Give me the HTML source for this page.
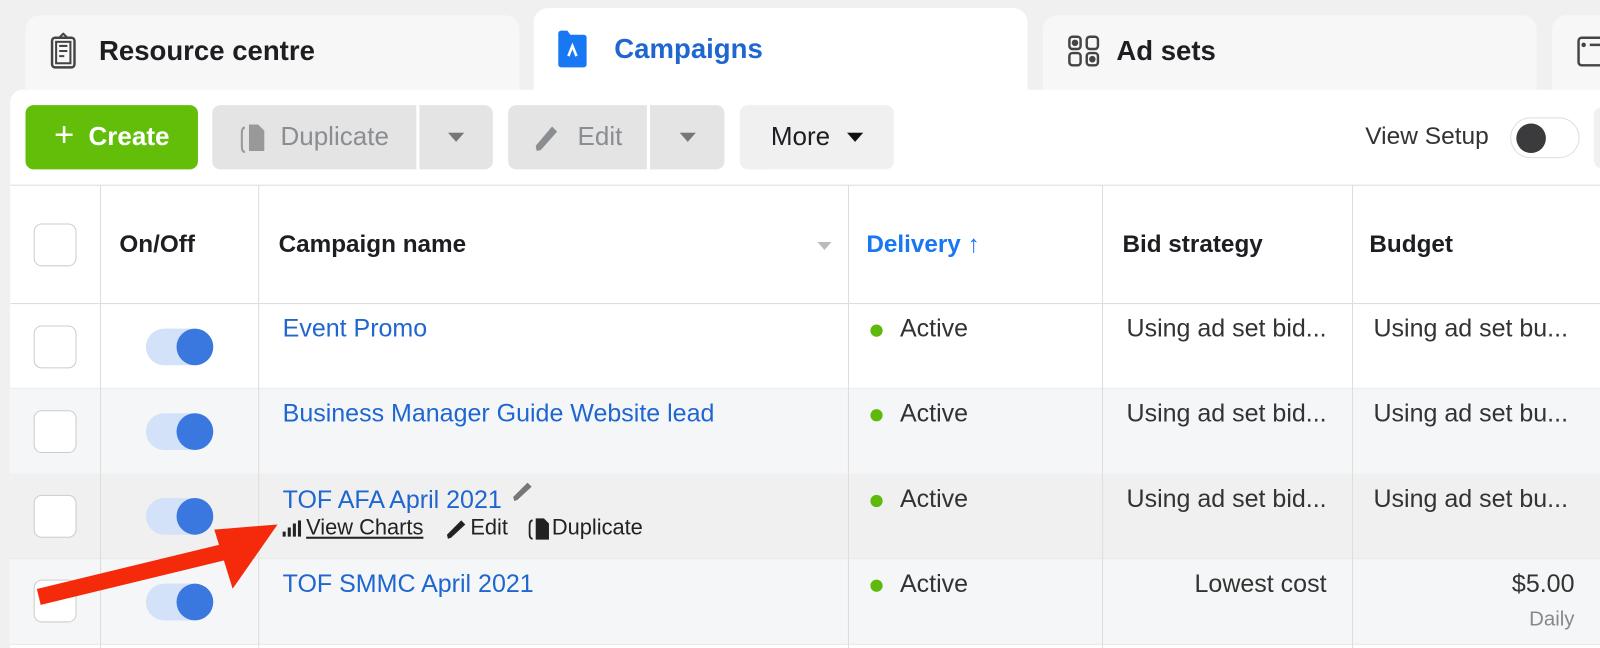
<!DOCTYPE html>
<html style="overflow:hidden;width:1600px;height:648px"><head><meta charset="utf-8"><style>
*{box-sizing:border-box;margin:0;padding:0}
body{width:1600px;height:648px;overflow:hidden;background:#f0f0f0;font-family:"Liberation Sans",Arial,sans-serif;color:#1c1e21;position:relative}
#w{position:absolute;left:0;top:0;width:1600px;height:635px;transform:scale(1.0204);transform-origin:0 0;overflow:hidden}
.abs{position:absolute}
.tab{position:absolute;top:15px;height:80px;background:#f7f7f7;border-radius:14px 14px 0 0;font-size:27px;font-weight:bold;display:flex;align-items:center;padding-left:24px;gap:16px;padding-bottom:10px}
.panel{position:absolute;left:10px;top:88px;width:1600px;height:580px;background:#fff;border-radius:12px 0 0 0}
.btn{position:absolute;top:103px;height:63px;border-radius:8px;display:flex;align-items:center;justify-content:center;font-size:25.5px}
.g{background:#e4e4e4;color:#8a8d91}
.vl{position:absolute;top:182px;height:466px;width:1px;background:#ddd}
.row{position:absolute;left:10px;width:1590px;height:84px;border-bottom:1px solid #e8e8e8}
.cb{position:absolute;left:33px;width:42px;height:42px;border:1px solid #ccc;border-radius:8px;background:#fff}
.tg{position:absolute;left:143px;width:66px;height:36px;border-radius:18px;background:#d3e2f8}
.tg:after{content:"";position:absolute;right:0;top:0;width:36px;height:36px;border-radius:50%;background:#3a78e0}
.t{position:absolute;font-size:24.5px;white-space:nowrap}
.lnk{color:#1f66d1}
.dot{position:absolute;width:12px;height:12px;border-radius:50%;background:#5fb90d}
.h{position:absolute;top:226px;font-size:23.8px;font-weight:bold}
</style></head><body><div id="w">
<div class="tab" style="left:25px;width:484px;color:#1c1e21;gap:22px">
<svg width="26" height="36" viewBox="0 0 26 36"><rect x="2" y="5" width="22" height="29" rx="3" fill="none" stroke="#444" stroke-width="2.4"/><rect x="6" y="9" width="14" height="21" fill="none" stroke="#444" stroke-width="2"/><path d="M9 13h8M9 18h8M9 23h5" stroke="#444" stroke-width="2"/><path d="M9 5l4-4 4 4" fill="none" stroke="#444" stroke-width="2"/></svg>Resource centre</div>
<div class="tab" style="left:523px;top:8px;height:90px;width:484px;background:#fff;color:#1f66d1;padding-bottom:10px;gap:27px">
<svg width="28" height="38" viewBox="0 0 28 38"><path d="M0 4a3 3 0 013-3h6l3 4h13a3 3 0 013 3v26a3 3 0 01-3 3H3a3 3 0 01-3-3z" fill="#1877f2"/><path d="M10 26l4-10 4 10" stroke="#fff" stroke-width="2.5" fill="none"/></svg>Campaigns</div>
<div class="tab" style="left:1022px;width:484px">
<svg width="32" height="32" viewBox="0 0 32 32" fill="none" stroke="#444" stroke-width="2.4"><rect x="2" y="2" width="11" height="12" rx="3"/><rect x="19" y="2" width="11" height="12" rx="3"/><rect x="2" y="18" width="11" height="12" rx="3"/><rect x="19" y="18" width="11" height="12" rx="3"/><circle cx="7.5" cy="8" r="2" fill="#444"/><circle cx="24.5" cy="24" r="2" fill="#444"/></svg>Ad sets</div>
<div class="tab" style="left:1521px;width:200px"><svg width="30" height="32" viewBox="0 0 30 32" fill="none" stroke="#444" stroke-width="2.4"><rect x="2" y="3" width="40" height="27" rx="3"/><path d="M13 10h30"/><circle cx="7" cy="10" r="1" fill="#444"/></svg></div>
<div class="panel"></div>
<div class="btn" style="left:25px;width:169px;background:#63be0a;color:#fff;font-weight:bold;gap:14px"><span style="font-size:34px;font-weight:normal;margin-top:-4px">+</span>Create</div>
<div class="btn g" style="left:208px;width:200px;border-radius:8px 0 0 8px;gap:10px"><svg width="30" height="30" viewBox="0 0 30 30"><path d="M5 5q-3 0-3 6v12q0 6 3 6" fill="none" stroke="#999" stroke-width="2"/><path d="M9 2h9l6 6v20H9z" fill="#999"/></svg>Duplicate</div>
<div class="btn g" style="left:411px;width:72px;border-radius:0 8px 8px 0"><svg width="16" height="10"><path d="M0 0h16L8 9z" fill="#777"/></svg></div>
<div class="btn g" style="left:498px;width:136px;border-radius:8px 0 0 8px;gap:16px"><svg width="28" height="28" viewBox="0 0 28 28"><path d="M4 27l-1-5L19 3l5 5L8 26z" fill="#8a8d91"/></svg>Edit</div>
<div class="btn g" style="left:637px;width:73px;border-radius:0 8px 8px 0"><svg width="16" height="10"><path d="M0 0h16L8 9z" fill="#777"/></svg></div>
<div class="btn" style="left:725px;width:151px;background:#f0f0f0;color:#1c1e21;gap:16px">More<svg width="16" height="10"><path d="M0 0h16L8 9z" fill="#111"/></svg></div>
<div class="t" style="left:1338px;top:120px;font-size:24px;color:#333">View Setup</div>
<div class="abs" style="left:1480px;top:115px;width:68px;height:40px;border:1px solid #ddd;border-radius:20px;background:#fff"><div class="abs" style="left:5px;top:5px;width:29px;height:29px;border-radius:50%;background:#3b3b3d"></div></div>
<div class="abs" style="left:1562px;top:105px;width:60px;height:60px;border-radius:8px;background:#f0f0f0"></div>
<div class="abs" style="left:10px;top:181px;width:1590px;height:1px;background:#ddd"></div>
<div class="row" style="top:297px;background:#fff;border-top:1px solid #ddd"></div>
<div class="row" style="top:381px;background:#f5f6f7"></div>
<div class="row" style="top:464px;background:#f0f0f0"></div>
<div class="row" style="top:548px;background:#f5f6f7"></div>
<div class="vl" style="left:98px"></div><div class="vl" style="left:253px"></div><div class="vl" style="left:831px"></div><div class="vl" style="left:1080px"></div><div class="vl" style="left:1325px"></div>
<div class="cb" style="top:219px"></div>
<div class="h" style="left:117px">On/Off</div>
<div class="h" style="left:273px">Campaign name</div>
<svg class="abs" style="left:801px;top:237px" width="14" height="9"><path d="M0 0h14L7 8z" fill="#bbb"/></svg>
<div class="h" style="left:849px;color:#1877f2">Delivery ↑</div>
<div class="h" style="left:1100px">Bid strategy</div>
<div class="h" style="left:1342px">Budget</div>

<div class="cb" style="top:319px"></div><div class="tg" style="top:322px"></div>
<div class="t lnk" style="left:277px;top:309px">Event Promo</div>
<div class="dot" style="left:853px;top:318px"></div><div class="t" style="left:882px;top:309px;color:#333">Active</div>
<div class="t" style="left:1104px;top:309px;color:#333">Using ad set bid...</div><div class="t" style="left:1346px;top:309px;color:#333">Using ad set bu...</div>

<div class="cb" style="top:402px"></div><div class="tg" style="top:405px"></div>
<div class="t lnk" style="left:277px;top:392px">Business Manager Guide Website lead</div>
<div class="dot" style="left:853px;top:401px"></div><div class="t" style="left:882px;top:392px;color:#333">Active</div>
<div class="t" style="left:1104px;top:392px;color:#333">Using ad set bid...</div><div class="t" style="left:1346px;top:392px;color:#333">Using ad set bu...</div>

<div class="cb" style="top:485px"></div><div class="tg" style="top:488px"></div>
<div class="t lnk" style="left:277px;top:470px">TOF AFA April 2021<svg style="margin-left:10px;vertical-align:6px" width="22" height="22" viewBox="0 0 22 22"><path d="M2 21l-1-4L15 3l4 4L5 20z" fill="#777"/></svg></div>
<div class="t" style="left:276px;top:505px;font-size:21.4px;color:#222;display:flex;align-items:center"><svg width="20" height="16" viewBox="0 0 20 16"><path d="M1 11h3v5H1zM6 7h3v9H6zM11 3h3v13h-3zM16 0h3v16h-3z" fill="#222"/></svg><span style="text-decoration:underline;margin-left:4px">View Charts</span><svg style="margin-left:22px" width="22" height="22" viewBox="0 0 22 22"><path d="M2 21l-1-4L15 3l4 4L5 20z" fill="#222"/></svg><span style="margin-left:2px">Edit</span><svg style="margin-left:20px" width="22" height="22" viewBox="0 0 22 22"><path d="M4 3q-3 0-3 5v8q0 5 3 5" fill="none" stroke="#222" stroke-width="1.8"/><path d="M7 1h8l5 5v16H7z" fill="#222"/></svg><span style="margin-left:1px">Duplicate</span></div>
<div class="dot" style="left:853px;top:485px"></div><div class="t" style="left:882px;top:476px;color:#333">Active</div>
<div class="t" style="left:1104px;top:476px;color:#333">Using ad set bid...</div><div class="t" style="left:1346px;top:476px;color:#333">Using ad set bu...</div>

<div class="cb" style="top:568px"></div><div class="tg" style="top:572px"></div>
<div class="t lnk" style="left:277px;top:559px">TOF SMMC April 2021</div>
<div class="dot" style="left:853px;top:568px"></div><div class="t" style="left:882px;top:559px;color:#333">Active</div>
<div class="t" style="right:300px;top:559px;color:#333">Lowest cost</div><div class="t" style="right:57px;top:559px;color:#333">$5.00</div>
<div class="t" style="right:57px;top:596px;font-size:20px;color:#888">Daily</div>

<svg class="abs" style="left:0;top:0" width="1600" height="648"><path d="M38 585L228 539" stroke="#f42a0b" stroke-width="16" stroke-linecap="butt"/><path d="M210 519L272 514L228 577z" fill="#f42a0b"/></svg>
</div></body></html>
